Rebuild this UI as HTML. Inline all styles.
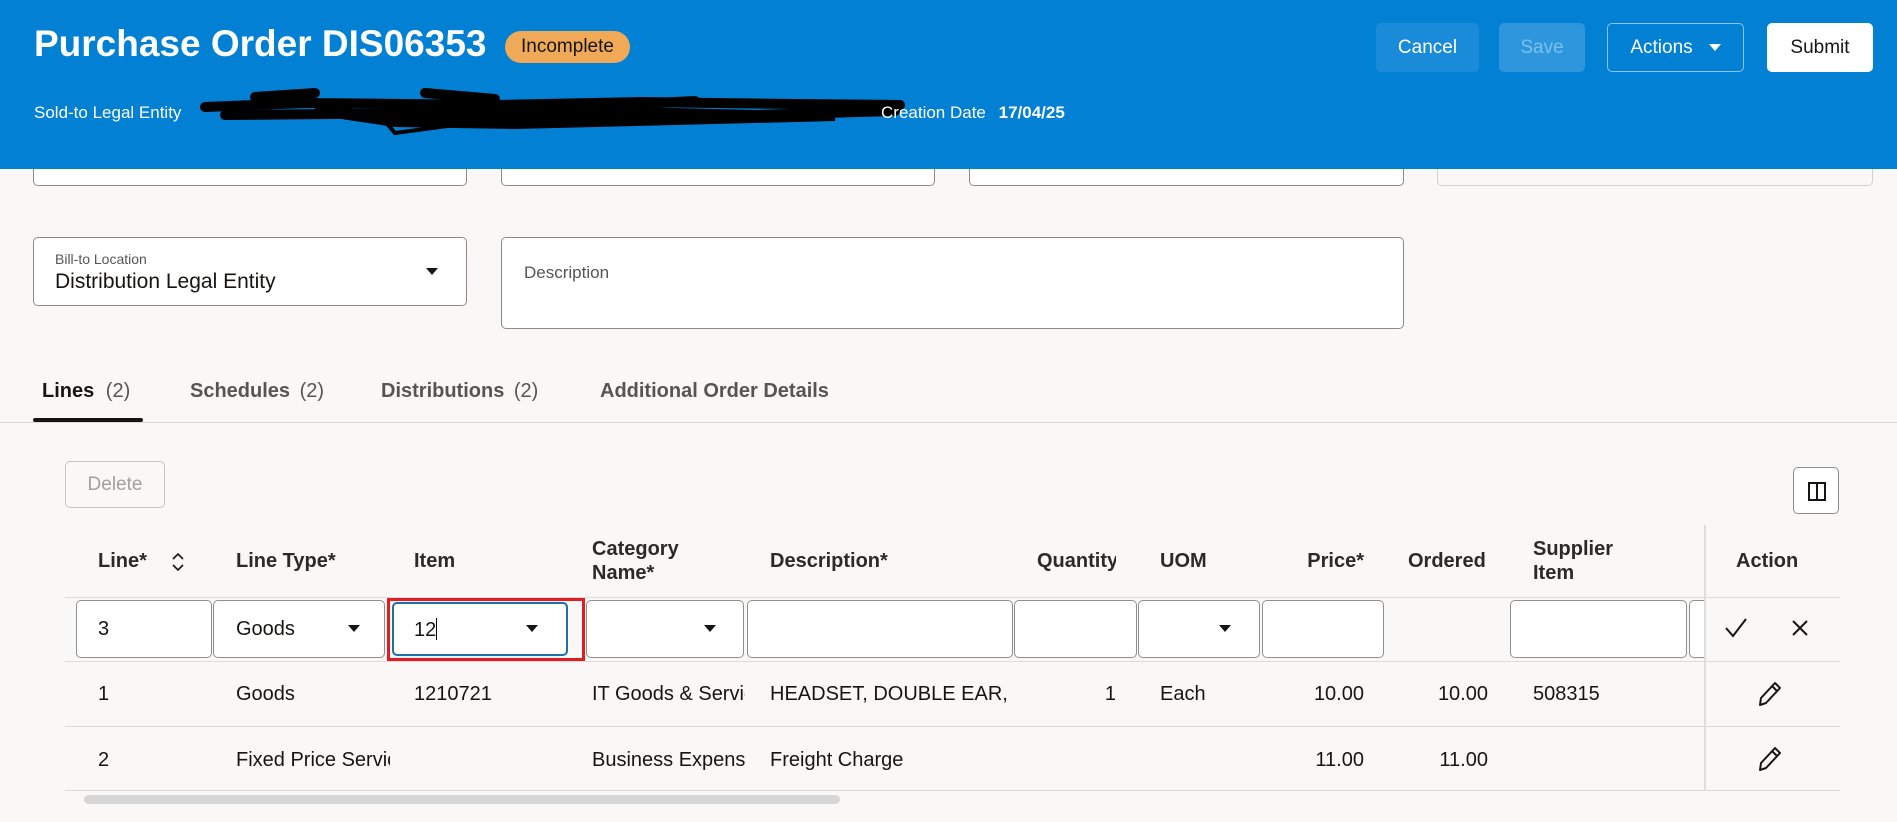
<!DOCTYPE html>
<html><head><meta charset="utf-8"><style>
*{box-sizing:border-box;margin:0;padding:0}
body{width:1897px;height:822px;overflow:hidden;background:#f9f8f6;font-family:"Liberation Sans",sans-serif;color:#161513;position:relative}
.a{position:absolute;white-space:nowrap}
.hdr{position:absolute;left:0;top:0;width:1897px;height:169px;background:#0180d4;z-index:2}
.btn{position:absolute;top:23px;height:49px;border-radius:5px;font-size:19px;display:flex;align-items:center;justify-content:center}
.box{position:absolute;background:#fff;border:1px solid #8b8b8b;border-radius:5px}
.inp{position:absolute;top:600px;height:58px;background:#fff;border:1px solid #8f8f8f;border-radius:5px}
.th{position:absolute;top:550px;font-size:20px;color:#2a2a2a;font-weight:bold}
.td{position:absolute;font-size:20px;overflow:hidden;white-space:nowrap}
.line{position:absolute;left:65px;width:1775px;height:1px;background:#dcdcdc}
.tri{position:absolute;width:0;height:0;border-left:6px solid transparent;border-right:6px solid transparent;border-top:7px solid #161513}
</style></head><body>
<div class="hdr">
 <div class="a" style="left:34px;top:23px;font-size:37px;font-weight:bold;color:#fff">Purchase Order DIS06353</div>
 <div class="a" style="left:505px;top:31px;width:125px;height:32px;border-radius:16px;background:#f0a956;font-size:19px;display:flex;align-items:center;justify-content:center;color:#161513">Incomplete</div>
 <div class="a" style="left:34px;top:103px;font-size:17px;color:#fff">Sold-to Legal Entity</div>
 <svg class="a" style="left:195px;top:85px" width="710" height="65" viewBox="0 0 710 65"><g fill="none" stroke="#000" stroke-linecap="round" stroke-width="10"><path d="M10 22 L110 18 L300 20 L445 17 L600 19 L705 20"/><path d="M30 30 L240 28 L400 26 L560 30 L700 26"/><path d="M60 12 L120 8 M230 8 L300 14 M420 20 L500 16"/></g><path d="M180 25 L200 48 L260 40 L360 30" stroke="#000" stroke-width="4" fill="none"/><path d="M120 24 L200 36 L320 38 L480 34 L640 30" stroke="#000" stroke-width="12" fill="none"/></svg>
 <div class="a" style="left:881px;top:103px;font-size:17px;color:#fff">Creation Date <b style="margin-left:8px">17/04/25</b></div>
 <div class="btn" style="left:1376px;width:103px;background:#1a8bd8;color:#fff">Cancel</div>
 <div class="btn" style="left:1499px;width:86px;background:#2e96dc;color:#7cc0ec">Save</div>
 <div class="btn" style="left:1607px;width:137px;border:1px solid #8cc4ee;color:#fff">Actions<span style="display:inline-block;margin-left:16px;border-left:6px solid transparent;border-right:6px solid transparent;border-top:7px solid #fff"></span></div>
 <div class="btn" style="left:1767px;width:106px;background:#fff;color:#161513">Submit</div>
</div>
<div class="box" style="left:33px;top:140px;width:434px;height:46px"></div>
<div class="box" style="left:501px;top:140px;width:434px;height:46px"></div>
<div class="box" style="left:969px;top:140px;width:435px;height:46px"></div>
<div class="box" style="left:1437px;top:140px;width:436px;height:46px;border-color:#d0d0d0;background:#f9f8f6"></div>
<div class="box" style="left:33px;top:237px;width:434px;height:69px"></div>
<div class="a" style="left:55px;top:251px;font-size:14px;color:#555">Bill-to Location</div>
<div class="a" style="left:55px;top:270px;font-size:21px">Distribution Legal Entity</div>
<div class="tri" style="left:426px;top:268px"></div>
<div class="box" style="left:501px;top:237px;width:903px;height:92px"></div>
<div class="a" style="left:524px;top:263px;font-size:17px;color:#555">Description</div>
<div class="a" style="left:42px;top:380px;font-size:20px;font-weight:bold">Lines <span style="font-weight:normal;color:#555;margin-left:6px">(2)</span></div>
<div class="a" style="left:190px;top:380px;font-size:20px;font-weight:bold;color:#555">Schedules <span style="font-weight:normal;margin-left:4px">(2)</span></div>
<div class="a" style="left:381px;top:380px;font-size:20px;font-weight:bold;color:#555">Distributions <span style="font-weight:normal;margin-left:4px">(2)</span></div>
<div class="a" style="left:600px;top:380px;font-size:20px;font-weight:bold;color:#555">Additional Order Details</div>
<div class="a" style="left:0;top:422px;width:1897px;height:1px;background:#dcdcdc"></div>
<div class="a" style="left:33px;top:418px;width:110px;height:4px;background:#161513;border-radius:2px"></div>
<div class="a" style="left:65px;top:461px;width:100px;height:47px;border:1px solid #c4c4c4;border-radius:5px;font-size:19px;color:#a0a0a0;display:flex;align-items:center;justify-content:center">Delete</div>
<div class="a" style="left:1793px;top:467px;width:46px;height:47px;border:1px solid #8b8b8b;border-radius:5px;background:#fff"><div style="position:absolute;left:14px;top:14px;width:18px;height:19px;border:2px solid #161513"></div><div style="position:absolute;left:22px;top:14px;width:2px;height:19px;background:#161513"></div></div>
<div class="th" style="left:98px">Line*</div>
<svg class="a" style="left:171px;top:552px" width="14" height="20"><path d="M2 7 L7 2 L12 7 M2 13 L7 18 L12 13" stroke="#161513" stroke-width="1.6" fill="none"/></svg>
<div class="th" style="left:236px">Line Type*</div>
<div class="th" style="left:414px">Item</div>
<div class="th" style="left:592px;top:537px;line-height:24px">Category<br>Name*</div>
<div class="th" style="left:770px">Description*</div>
<div class="th" style="left:1037px;width:79px;overflow:hidden">Quantity</div>
<div class="th" style="left:1160px">UOM</div>
<div class="th" style="left:1290px;width:74px;text-align:right">Price*</div>
<div class="th" style="left:1408px;width:80px;overflow:hidden">Ordered</div>
<div class="th" style="left:1533px;top:537px;line-height:24px">Supplier<br>Item</div>
<div class="th" style="left:1736px">Action</div>
<div class="line" style="top:597px"></div>
<div class="line" style="top:661px"></div>
<div class="line" style="top:726px"></div>
<div class="line" style="top:790px"></div>
<div class="a" style="left:1704px;top:525px;width:2px;height:265px;background:#dedede"></div>
<div class="inp" style="left:76px;width:136px"></div>
<div class="inp" style="left:213px;width:172px"></div>
<div class="a" style="left:387px;top:598px;width:198px;height:63px;border:3px solid #e21c23"></div>
<div class="inp" style="left:392px;top:602px;height:54px;width:176px;border:2px solid #1f6fa8"></div>
<div class="inp" style="left:586px;width:158px"></div>
<div class="inp" style="left:747px;width:266px"></div>
<div class="inp" style="left:1014px;width:123px"></div>
<div class="inp" style="left:1138px;width:122px"></div>
<div class="inp" style="left:1262px;width:122px"></div>
<div class="inp" style="left:1510px;width:177px"></div>
<div class="inp" style="left:1689px;width:15px;border-right:none;border-radius:5px 0 0 5px"></div>
<div class="td" style="left:98px;top:618px">3</div>
<div class="td" style="left:236px;top:618px">Goods</div><div class="tri" style="left:348px;top:625px"></div>
<div class="td" style="left:414px;top:618px">12<span style="display:inline-block;width:1px;height:22px;background:#000;vertical-align:-4px"></span></div><div class="tri" style="left:526px;top:625px"></div>
<div class="tri" style="left:704px;top:625px"></div>
<div class="tri" style="left:1219px;top:625px"></div>
<svg class="a" style="left:1724px;top:616px" width="24" height="24"><path d="M2 12 L9 20 L22 3" stroke="#161513" stroke-width="2" fill="none"/></svg>
<svg class="a" style="left:1791px;top:619px" width="18" height="18"><path d="M2 2 L16 16 M16 2 L2 16" stroke="#161513" stroke-width="2"/></svg>
<div class="td" style="left:98px;top:683px">1</div>
<div class="td" style="left:236px;top:683px">Goods</div>
<div class="td" style="left:414px;top:683px">1210721</div>
<div class="td" style="left:592px;top:683px;width:153px">IT Goods &amp; Services</div>
<div class="td" style="left:770px;top:683px;width:243px">HEADSET, DOUBLE EAR, USB</div>
<div class="td" style="left:1060px;top:683px;width:56px;text-align:right">1</div>
<div class="td" style="left:1160px;top:683px">Each</div>
<div class="td" style="left:1290px;top:683px;width:74px;text-align:right">10.00</div>
<div class="td" style="left:1408px;top:683px;width:80px;text-align:right">10.00</div>
<div class="td" style="left:1533px;top:683px">508315</div>
<div class="td" style="left:98px;top:749px">2</div>
<div class="td" style="left:236px;top:749px;width:154px">Fixed Price Services</div>
<div class="td" style="left:592px;top:749px;width:153px">Business Expenses</div>
<div class="td" style="left:770px;top:749px">Freight Charge</div>
<div class="td" style="left:1290px;top:749px;width:74px;text-align:right">11.00</div>
<div class="td" style="left:1408px;top:749px;width:80px;text-align:right">11.00</div>
<svg class="a" style="left:1755px;top:680px" width="28" height="28"><path d="M5 25 L6 18 L20 3 L25 8 L11 23 Z M17 6 L22 11" stroke="#161513" stroke-width="2" fill="none" stroke-linejoin="round"/></svg>
<svg class="a" style="left:1755px;top:745px" width="28" height="28"><path d="M5 25 L6 18 L20 3 L25 8 L11 23 Z M17 6 L22 11" stroke="#161513" stroke-width="2" fill="none" stroke-linejoin="round"/></svg>
<div class="a" style="left:84px;top:795px;width:756px;height:9px;border-radius:5px;background:#d6d6d6"></div>
</body></html>
